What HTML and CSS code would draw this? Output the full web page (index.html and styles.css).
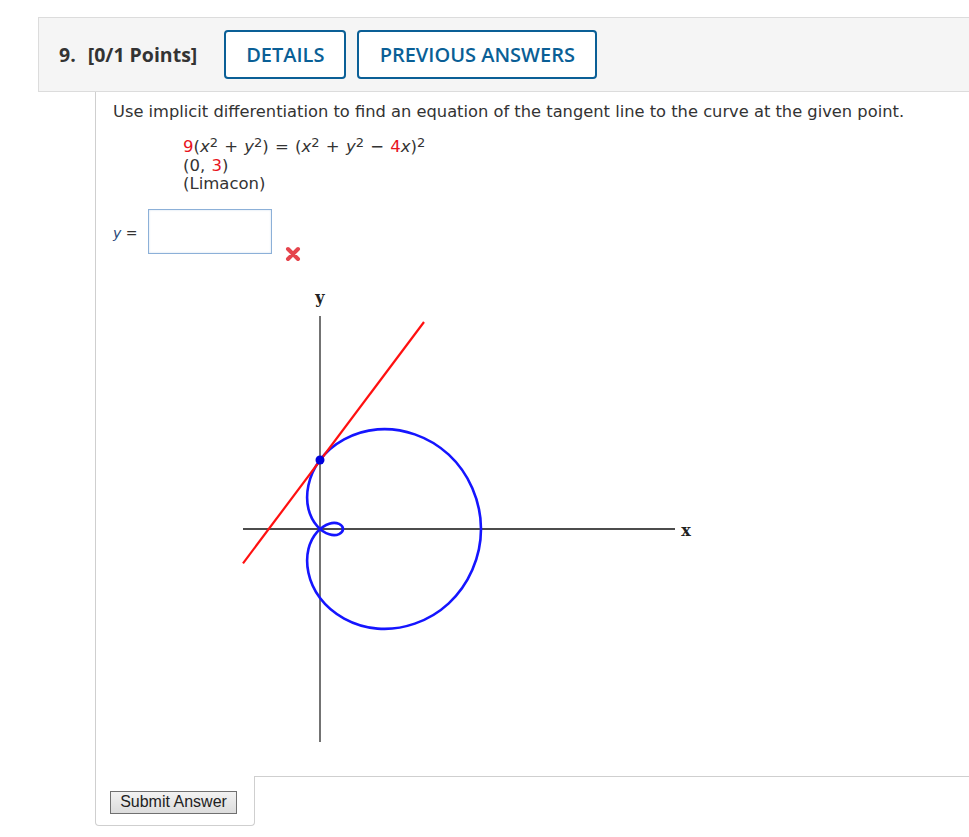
FILE: index.html
```html
<!DOCTYPE html>
<html>
<head>
<meta charset="utf-8">
<link rel="stylesheet" href="styles.css">
</head>
<body>
<div class="page">
  <div class="header">
    <span class="qnum">9.</span>
    <span class="points">[0/1 Points]</span>
    <button class="hbtn details">DETAILS</button>
    <button class="hbtn prev">PREVIOUS ANSWERS</button>
  </div>
  <div class="main">
    <p class="question">Use implicit differentiation to find an equation of the tangent line to the curve at the given point.</p>
    <div class="eq">
      <div><span class="red">9</span>(<i>x</i><sup>2</sup> + <i>y</i><sup>2</sup>) = (<i>x</i><sup>2</sup> + <i>y</i><sup>2</sup> &minus; <span class="red">4</span><i>x</i>)<sup>2</sup></div>
      <div>(0, <span class="red">3</span>)</div>
      <div>(Limacon)</div>
    </div>
    <div class="answer-row">
      <span class="label"><i>y</i> =</span>
      <input class="answer" type="text">
      <svg class="wrong" width="16" height="16" viewBox="0 0 16 16">
        <path d="M3 3 L13 13 M13 3 L3 13" stroke="#e5454d" stroke-width="4" stroke-linecap="round"/>
      </svg>
    </div>
    <svg class="graph" width="480" height="470" viewBox="230 280 480 470">
      <line x1="320" y1="315" x2="320" y2="741" stroke="#444" stroke-width="1.5"/>
      <line x1="243" y1="528" x2="675" y2="528" stroke="#111" stroke-width="1.5"/>
      <text x="320" y="302" class="axislabel" text-anchor="middle">y</text>
      <text x="686" y="535" class="axislabel" text-anchor="middle">x</text>
      <path fill="none" stroke="#1515ff" stroke-width="2.6"
        d="M481,528 C481,499.9 468.68,472.12 448.75,453.66
           C428.82,435.2 401.83,426.4 377.5,428.41
           C353.17,430.42 332.04,442.94 320,459
           C307.96,475.06 305.02,494.03 308.5,508.08
           C311.98,522.13 321.37,530.94 329.25,533.34
           C337.13,535.74 343,532.01 343,528
           C343,523.99 337.13,520.26 329.25,522.66
           C321.37,525.06 311.98,533.87 308.5,547.92
           C305.02,561.97 307.96,580.94 320,597
           C332.04,613.06 353.17,625.58 377.5,627.59
           C401.83,629.6 428.82,620.8 448.75,602.34
           C468.68,583.88 481,556.1 481,528 Z"/>
      <line x1="243" y1="562.3" x2="424" y2="321" stroke="#ff1010" stroke-width="2.2"/>
      <circle cx="320" cy="459" r="4.5" fill="#0000dd"/>
    </svg>
  </div>
  <div class="footer">
    <div class="tab"><button class="submit">Submit Answer</button></div>
    <div class="rest"></div>
  </div>
</div>
</body>
</html>
```

FILE: styles.css
```css
html, body {
  margin: 0;
  padding: 0;
  background: #fff;
  overflow: hidden;
}
.page {
  width: 1000px;
}
.header {
  margin: 17px 0 0 38px;
  height: 73px;
  border: 1px solid #dcdcdc;
  border-right: none;
  background: #f5f5f5;
  display: flex;
  align-items: center;
  padding-left: 20px;
  font-family: "Open Sans", sans-serif;
  color: #333;
}
.qnum, .points {
  font-weight: 700;
  font-size: 19.5px;
}
.points {
  margin-left: 12px;
  margin-right: 27px;
}
.hbtn {
  height: 49px;
  border: 2px solid #0a5f96;
  border-radius: 4px;
  background: #fff;
  color: #0a5f96;
  font-family: "Open Sans", sans-serif;
  font-weight: 600;
  font-size: 20px;
  padding: 0;
  margin-right: 11px;
}
.details { width: 122px; }
.prev { width: 240px; }
.main {
  margin-left: 95px;
  border-left: 1px solid #cfcfcf;
  padding: 10px 0 25px 17px;
  font-family: "DejaVu Sans", Verdana, sans-serif;
  color: #333;
  font-size: 16.3px;
}
.question {
  margin: 0;
  line-height: 20px;
}
.eq {
  margin: 16px 0 0 70px;
  line-height: 18.5px;
  font-size: 16.5px;
  word-spacing: 1px;
}
.eq i {
  font-style: italic;
}
.eq sup {
  font-size: 13px;
  vertical-align: 5px;
  line-height: 0;
}
.red { color: #e8141d; }
.answer-row {
  margin-top: 15px;
  height: 54px;
  display: flex;
  align-items: flex-start;
}
.label {
  margin-top: 16px;
  width: 35px;
  font-size: 14px;
}
.label i { color: #2c4a7a; }
.answer {
  width: 124px;
  height: 45px;
  box-sizing: border-box;
  border: 1px solid #8cb0d8;
  box-shadow: inset 0 0 2px #c6d8ec;
  margin: 0;
}
.wrong {
  margin: 37px 0 0 13px;
}
.graph {
  display: block;
  margin: 18px 0 0 117px;
}
.axislabel {
  font-family: "DejaVu Serif", "Liberation Serif", serif;
  font-weight: 700;
  font-size: 16px;
  fill: #222;
}
.footer {
  display: flex;
  margin-left: 95px;
}
.tab {
  width: 160px;
  height: 50px;
  border: 1px solid #cfcfcf;
  border-top: none;
  border-radius: 0 0 4px 4px;
  padding: 15px 0 0 14px;
  box-sizing: border-box;
}
.rest {
  flex: 1;
  border-top: 1px solid #cfcfcf;
}
.submit {
  width: 127px;
  height: 23px;
  padding: 0;
  font-family: "Liberation Sans", Arial, sans-serif;
  font-size: 16px;
  color: #222;
  border: 1px solid #707070;
  border-radius: 0;
  background: linear-gradient(#f2f2f2, #dcdcdc);
}
```
